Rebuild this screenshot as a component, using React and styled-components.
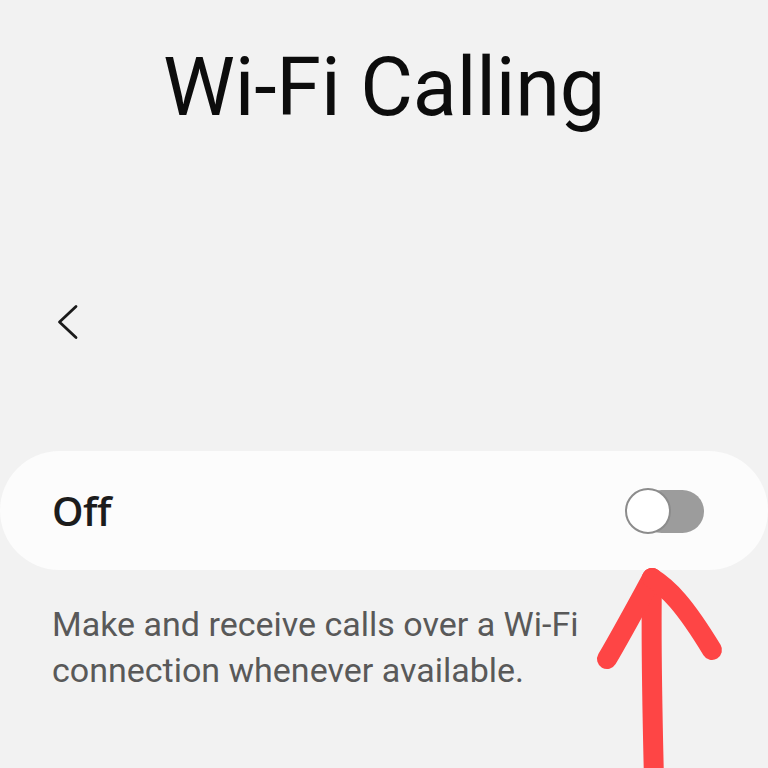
import React from "react";
import styled, { createGlobalStyle } from "styled-components";

const Global = createGlobalStyle`
  html, body {
    margin: 0;
    padding: 0;
    background: #f2f2f2;
  }
  body {
    width: 768px;
    height: 768px;
    overflow: hidden;
    font-family: Roboto, "Liberation Sans", sans-serif;
  }
`;

const Screen = styled.div`
  position: relative;
  width: 768px;
  height: 768px;
  background: #f2f2f2;
  display: flex;
  flex-direction: column;
`;

const Title = styled.h1`
  margin: 0;
  padding-top: 40px;
  font-family: Roboto, "Liberation Sans", sans-serif;
  font-weight: 400;
  font-size: 81px;
  line-height: 96px;
  color: #0c0c0c;
  text-align: center;
  letter-spacing: -0.2px;
`;

const NavBar = styled.div`
  display: flex;
  align-items: center;
  height: 44px;
  margin-top: 164px;
  padding-left: 44px;
`;

const BackButton = styled.button`
  display: flex;
  align-items: center;
  justify-content: center;
  width: 44px;
  height: 44px;
  padding: 0;
  border: none;
  background: transparent;
  color: #1a1a1a;
`;

const Card = styled.div`
  display: flex;
  align-items: center;
  justify-content: space-between;
  height: 119px;
  margin-top: 107px;
  padding: 0 64px 0 52px;
  background: #fcfcfc;
  border-radius: 60px;
`;

const Label = styled.span`
  font-family: "Open Sans", "Noto Sans", sans-serif;
  font-weight: 600;
  font-size: 40px;
  color: #1c1c1c;
  letter-spacing: -0.5px;
`;

const Switch = styled.div`
  position: relative;
  width: 79px;
  height: 46px;
  display: flex;
  align-items: center;
`;

const Track = styled.div`
  position: absolute;
  left: 15px;
  right: 0;
  top: 2px;
  bottom: 1px;
  border-radius: 22px;
  background: ${(p) => (p.$on ? "#3e91ff" : "#9c9c9c")};
`;

const Thumb = styled.div`
  position: relative;
  width: 42px;
  height: 42px;
  border-radius: 50%;
  background: #ffffff;
  border: 2px solid #8c8c8c;
  margin-left: ${(p) => (p.$on ? "33px" : "0")};
`;

const Description = styled.p`
  margin: 0;
  padding: 31px 30px 0 52px;
  font-family: Roboto, "Liberation Sans", sans-serif;
  font-size: 34px;
  line-height: 46px;
  color: #595959;
`;

const Annotation = styled.svg`
  position: absolute;
  left: 590px;
  top: 550px;
  width: 140px;
  height: 218px;
  pointer-events: none;
`;

export default function App() {
  const on = false;
  return (
    <>
      <Global />
      <Screen>
        <Title>Wi-Fi Calling</Title>
        <NavBar>
          <BackButton aria-label="Back">
            <svg width="44" height="44" viewBox="0 0 44 44" fill="none">
              <path
                d="M32 6.5 L15.5 22 L32 37.5"
                stroke="currentColor"
                strokeWidth="2.8"
                strokeLinecap="round"
                strokeLinejoin="round"
              />
            </svg>
          </BackButton>
        </NavBar>
        <Card>
          <Label>Off</Label>
          <Switch>
            <Track $on={on} />
            <Thumb $on={on} />
          </Switch>
        </Card>
        <Description>
          Make and receive calls over a Wi-Fi
          <br />
          connection whenever available.
        </Description>
        <Annotation viewBox="590 550 140 218">
          <g
            fill="none"
            stroke="#fe4545"
            strokeWidth="20"
            strokeLinecap="round"
            strokeLinejoin="round"
          >
            <path d="M652 578 C651 630 652 700 654 780" />
            <path d="M652 578 C640 600 624 630 607 659" />
            <path d="M652 578 C668 588 684 604 712 650" />
          </g>
        </Annotation>
      </Screen>
    </>
  );
}
